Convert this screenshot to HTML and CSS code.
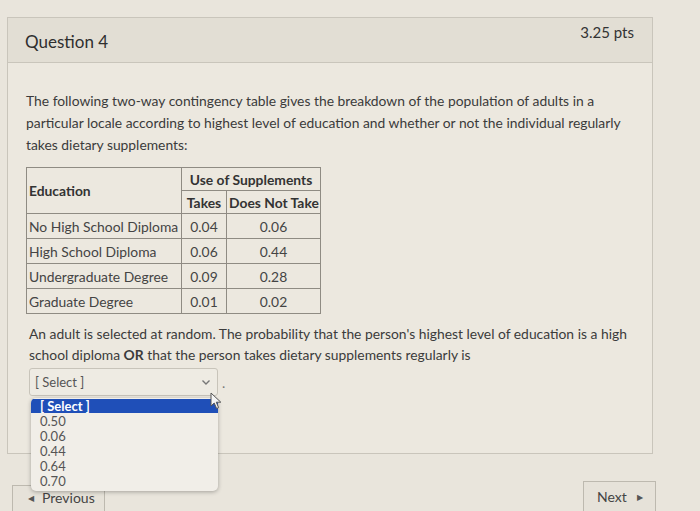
FILE: index.html
```html
<!DOCTYPE html>
<html lang="en">
<head>
	<meta charset="UTF-8">
	<title>Question 4</title>
	<link rel="stylesheet" href="styles.css">
</head>
<body>
	<div class="question">
		<div class="header">
			<div class="title">Question 4</div>
			<div class="pts">3.25 pts</div>
		</div>
		<div class="content">
			<p class="intro">The following two-way contingency table gives the breakdown of the population of adults in a particular locale according to highest level of education and whether or not the individual regularly takes dietary supplements:</p>
			<table class="data">
				<colgroup>
					<col class="w1">
					<col class="w2">
					<col class="w3">
				</colgroup>
				<tr class="head1">
					<th rowspan="2" class="edu">Education</th>
					<th colspan="2">Use of Supplements</th>
				</tr>
				<tr class="head2">
					<th>Takes</th>
					<th>Does Not Take</th>
				</tr>
				<tr><td class="edu">No High School Diploma</td><td>0.04</td><td>0.06</td></tr>
				<tr><td class="edu">High School Diploma</td><td>0.06</td><td>0.44</td></tr>
				<tr><td class="edu">Undergraduate Degree</td><td>0.09</td><td>0.28</td></tr>
				<tr><td class="edu">Graduate Degree</td><td>0.01</td><td>0.02</td></tr>
			</table>
			<p class="ask">An adult is selected at random. The probability that the person's highest level of education is a high school diploma <b>OR</b> that the person takes dietary supplements regularly is</p>
			<div class="answer">
				<div class="select">
					<span>[ Select ]</span>
					<svg width="10" height="7" viewBox="0 0 10 7"><path d="M1.5 1.5 L5 5 L8.5 1.5" fill="none" stroke="#777" stroke-width="1.4"/></svg>
				</div>
				<span class="dot">.</span>
				<!-- open option list -->
				<ul class="options">
					<li class="active">[ Select ]</li>
					<li>0.50</li>
					<li>0.06</li>
					<li>0.44</li>
					<li>0.64</li>
					<li>0.70</li>
				</ul>
				<svg class="cursor" width="14" height="18" viewBox="0 0 14 18"><path d="M1 1 L1 14 L4.2 11 L6.6 16.5 L8.6 15.6 L6.3 10.2 L10.8 10.2 Z" fill="#f4f4f4" stroke="#555" stroke-width="1"/></svg>
			</div>
		</div>
	</div>
	<div class="footer">
		<div class="btn prev"><span class="arr">&#9664;</span>Previous</div>
		<div class="btn next">Next<span class="arr">&#9654;</span></div>
	</div>
</body>
</html>
```

FILE: styles.css
```css
*{
	padding: 0;
	margin: 0;
	box-sizing: border-box;
}
body{
	width: 700px;
	height: 511px;
	overflow: hidden;
	background: #e9e5dc;
	font-family: Lato, "Noto Sans", sans-serif;
	color: #3b3b3b;
	padding: 17px 0 0 7px;
}
.question{
	width: 646px;
	border: 1px solid #c9c5bb;
	background: #ece8df;
}
.header{
	height: 45px;
	background: #e2ded4;
	border-bottom: 1px solid #c9c5bb;
	display: flex;
	justify-content: space-between;
	padding: 0 18px 0 17px;
}
.title{
	font-size: 17px;
	padding-top: 13px;
	color: #2f2f2f;
}
.pts{
	font-size: 15px;
	padding-top: 5px;
	color: #333;
}
.content{
	padding: 27px 18px 57px 18px;
	font-size: 13.85px;
	position: relative;
}
.intro{
	line-height: 22px;
	width: 605px;
}
.data{
	margin-top: 11px;
	border-collapse: collapse;
	table-layout: fixed;
	width: 294px;
	font-size: 13.85px;
	color: #444;
}
.w1{ width: 155px; }
.w2{ width: 45px; }
.w3{ width: 94px; }
.data th, .data td{
	border: 1px solid #8f8b83;
	padding: 0 2px;
	text-align: center;
	white-space: nowrap;
}
.data th{
	font-weight: bold;
	color: #333;
	height: 23px;
}
.data td{
	height: 25px;
}
.data .edu{
	text-align: left;
}
.ask{
	margin-top: 9px;
	line-height: 21px;
	padding-left: 3px;
	width: 612px;
}
.answer{
	margin-top: 3px;
	padding-left: 3px;
	display: flex;
	align-items: center;
	position: relative;
}
.select{
	width: 189px;
	height: 28px;
	border: 1px solid #c8c4ba;
	border-radius: 3px;
	background: #eeebe3;
	display: flex;
	align-items: center;
	justify-content: space-between;
	padding: 0 6px 0 5px;
	font-size: 13px;
	color: #555;
}
.dot{
	margin-left: 4px;
	color: #777;
}
.options{
	position: absolute;
	left: 5px;
	top: 30px;
	width: 187px;
	list-style: none;
	background: #f1eee8;
	border-radius: 5px;
	box-shadow: 0 1px 4px rgba(0,0,0,0.3);
	padding-bottom: 2px;
	font-size: 13px;
	color: #555;
	overflow: hidden;
}
.options li{
	height: 15px;
	line-height: 15px;
	padding-left: 9px;
}
.options li.active{
	background: #1f4fb8;
	color: #fff;
	font-weight: bold;
	height: 14px;
	margin: 1px 0;
}
.cursor{
	position: absolute;
	left: 184px;
	top: 24px;
}
.footer{
	display: flex;
	justify-content: space-between;
	margin-top: 27px;
	padding-left: 5px;
	width: 649px;
}
.btn{
	border: 1px solid #bdb9af;
	background: #e6e2d9;
	height: 34px;
	font-size: 14px;
	color: #444;
	display: flex;
}
.prev{
	width: 93px;
	padding-left: 15px;
	margin-top: 4px;
	padding-top: 3px;
}
.next{
	width: 73px;
	padding-left: 13px;
	padding-top: 6px;
}
.arr{
	font-size: 8px;
	color: #555;
	line-height: 18px;
}
.prev .arr{
	margin-right: 8px;
}
.next .arr{
	margin-left: 10px;
}
```
